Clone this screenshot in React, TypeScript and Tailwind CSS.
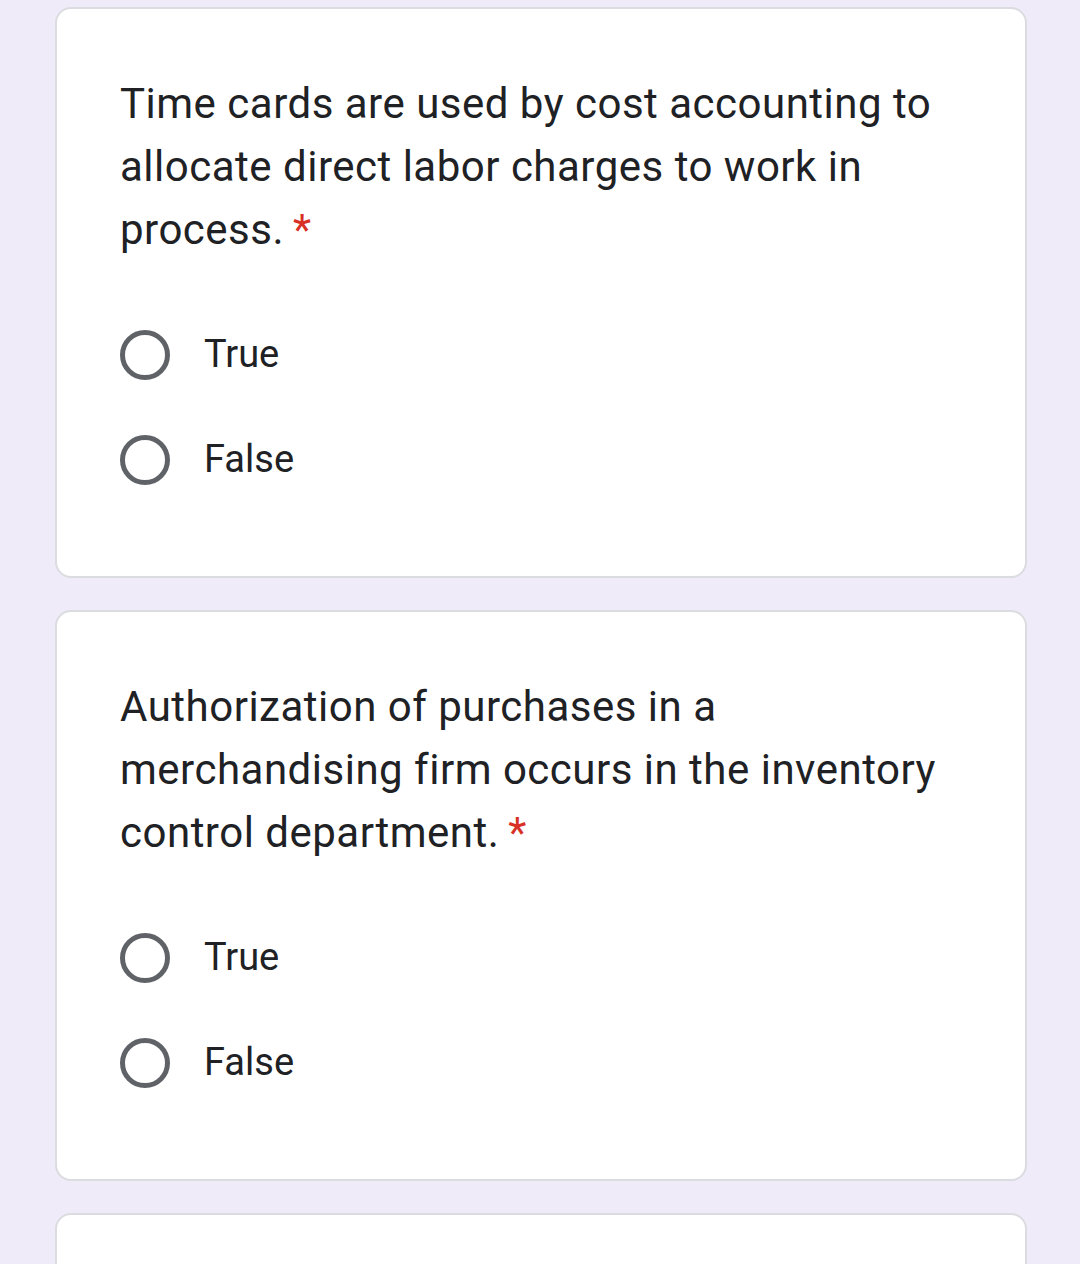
const questions = [
  {
    id: "q1",
    text: "Time cards are used by cost accounting to allocate direct labor charges to work in process.",
  },
  {
    id: "q2",
    text: "Authorization of purchases in a merchandising firm occurs in the inventory control department.",
  },
];

function Option({ label }: { label: string }) {
  return (
    <div className="flex h-[105px] items-center">
      <div className="h-[50px] w-[50px] shrink-0 rounded-full border-[5px] border-[#5f6368]" />
      <span
        className="ml-[34px] text-[38px] text-[#202124]"
        style={{ fontFamily: "Roboto, 'Liberation Sans', sans-serif" }}
      >
        {label}
      </span>
    </div>
  );
}

function QuestionCard({ text }: { text: string }) {
  return (
    <div className="rounded-[16px] border-2 border-[#dadce0] bg-white pl-[63px] pr-[50px] pt-[63px] pb-[64px]">
      <p
        className="text-[42px] leading-[63px] tracking-[0.5px] text-[#202124]"
        style={{ fontFamily: "Roboto, 'Liberation Sans', sans-serif" }}
      >
        {text}
        <span className="ml-[9px] text-[#d93025]">*</span>
      </p>
      <div className="mt-[41px]">
        <Option label="True" />
        <Option label="False" />
      </div>
    </div>
  );
}

export default function App() {
  return (
    <div className="min-h-screen bg-[#f0ebf8] pl-[55px] pr-[53px] pt-[7px]">
      <div className="flex flex-col gap-[32px]">
        {questions.map((q) => (
          <QuestionCard key={q.id} text={q.text} />
        ))}
        <div className="h-[300px] rounded-[16px] border-2 border-[#dadce0] bg-white" />
      </div>
    </div>
  );
}
